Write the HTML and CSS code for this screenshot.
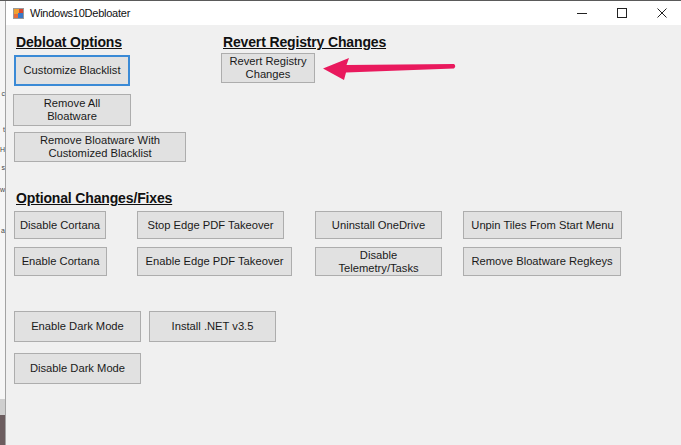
FILE: index.html
```html
<!DOCTYPE html>
<html>
<head>
<meta charset="utf-8">
<link rel="stylesheet" href="styles.css">
</head>
<body>
<div class="screen">
  <div class="topline"></div>
  <div class="main">
    <div class="desk">
      <div class="desk-text">
        <div class="frag f1">c</div>
        <div class="frag f2">t</div>
        <div class="frag f3">H</div>
        <div class="frag f4">s</div>
        <div class="frag f5">w</div>
        <div class="frag f6">a</div>
      </div>
      <div class="desk-gray"></div>
      <div class="desk-dark"></div>
    </div>
    <div class="window">
      <div class="titlebar">
        <svg class="appicon" width="11" height="11" viewBox="0 0 11 11">
          <rect x="0.5" y="0.5" width="10" height="10" fill="#e8e8e8" stroke="#9a9a9a"/>
          <rect x="1" y="1" width="5" height="5" fill="#f0a030"/>
          <rect x="6" y="1" width="4" height="4" fill="#d9452f"/>
          <rect x="1" y="6" width="4" height="4" fill="#e86c3a"/>
          <rect x="5" y="5" width="5" height="5" fill="#3a78c8"/>
        </svg>
        <span class="title">Windows10Debloater</span>
        <div class="caption">
          <div class="capbtn">
            <svg width="10" height="10" viewBox="0 0 10 10"><line x1="0" y1="5.5" x2="10" y2="5.5" stroke="#222" stroke-width="1"/></svg>
          </div>
          <div class="capbtn">
            <svg width="10" height="10" viewBox="0 0 10 10"><rect x="0.5" y="0.5" width="9" height="9" fill="none" stroke="#222" stroke-width="1"/></svg>
          </div>
          <div class="capbtn close">
            <svg width="10" height="10" viewBox="0 0 10 10"><path d="M0.5 0.5 L9.5 9.5 M9.5 0.5 L0.5 9.5" stroke="#222" stroke-width="1" fill="none"/></svg>
          </div>
        </div>
      </div>
      <div class="client">
        <div class="top">
          <div class="col1">
            <div class="heading">Debloat Options</div>
            <div class="btn focused b-customize">Customize Blacklist</div>
            <div class="btn b-removeall">Remove All<br>Bloatware</div>
            <div class="btn b-removewith">Remove Bloatware With<br>Customized Blacklist</div>
          </div>
          <div class="col2">
            <div class="heading">Revert Registry Changes</div>
            <div class="revert-row">
              <div class="btn b-revert">Revert Registry<br>Changes</div>
              <svg class="arrow" width="138" height="27" viewBox="0 0 138 27">
                <path d="M3 13.5 L29 3 L26.5 10 L134 9 Q136.5 11 134 13.5 L26 17.5 L24 25 Z" fill="#e9195d"/>
              </svg>
            </div>
          </div>
        </div>
        <div class="heading opt">Optional Changes/Fixes</div>
        <div class="grid4">
          <div class="btn r1 w92">Disable Cortana</div>
          <div class="btn r1 w147">Stop Edge PDF Takeover</div>
          <div class="btn r1 w127">Uninstall OneDrive</div>
          <div class="btn r1 w159">Unpin Tiles From Start Menu</div>
          <div class="btn r2 w93">Enable Cortana</div>
          <div class="btn r2 w155">Enable Edge PDF Takeover</div>
          <div class="btn r2 w127">Disable<br>Telemetry/Tasks</div>
          <div class="btn r2 w158">Remove Bloatware Regkeys</div>
        </div>
        <div class="row3">
          <div class="btn tall w127">Enable Dark Mode</div>
          <div class="btn tall w127">Install .NET v3.5</div>
        </div>
        <div class="row4">
          <div class="btn tall w127">Disable Dark Mode</div>
        </div>
      </div>
    </div>
  </div>
</div>
</body>
</html>
```
FILE: styles.css
```css
* { box-sizing: border-box; }
html, body { margin: 0; padding: 0; }
body {
  width: 681px;
  height: 445px;
  overflow: hidden;
  background: #f0f0f0;
  font-family: "Liberation Sans", Arial, sans-serif;
}
.screen {
  width: 681px;
  height: 445px;
  display: flex;
  flex-direction: column;
  overflow: hidden;
}
.topline {
  height: 1px;
  background: #5a5a5a;
  flex: none;
}
.main {
  flex: 1;
  display: flex;
  min-height: 0;
}
.desk {
  width: 5px;
  flex: none;
  display: flex;
  flex-direction: column;
}
.desk-text {
  flex: 1;
  background: #f6f6f6;
  font-size: 7px;
  color: #444;
  line-height: 10px;
}
.frag {
  height: 10px;
  text-align: right;
  white-space: nowrap;
}
.f1 { margin-top: 88px; }
.f2 { margin-top: 26px; }
.f3 { margin-top: 10px; }
.f4 { margin-top: 8px; }
.f5 { margin-top: 12px; }
.f6 { margin-top: 31px; }
.desk-gray {
  height: 16px;
  flex: none;
  background: #cfcfcf;
}
.desk-dark {
  height: 30px;
  flex: none;
  background: #6c5d5f;
}
.window {
  flex: 1;
  display: flex;
  flex-direction: column;
  border-left: 1px solid #a3a3a3;
  background: #f0f0f0;
  min-width: 0;
}
.titlebar {
  height: 24px;
  flex: none;
  background: #ffffff;
  display: flex;
  align-items: center;
  padding-left: 7px;
}
.appicon { flex: none; }
.title {
  margin-left: 6px;
  font-size: 11px;
  letter-spacing: -0.25px;
  color: #111;
}
.caption {
  margin-left: auto;
  display: flex;
  height: 24px;
}
.capbtn {
  width: 40px;
  height: 24px;
  display: flex;
  align-items: center;
  justify-content: center;
}
.capbtn.close { width: 39px; }
.capbtn svg { display: block; }
.client {
  flex: 1;
  padding-left: 8px;
  display: flex;
  flex-direction: column;
  align-items: flex-start;
}
.heading {
  font-size: 14px;
  font-weight: bold;
  text-decoration: underline;
  line-height: 16px;
  height: 16px;
  color: #111;
  margin-left: 2px;
  white-space: nowrap;
  letter-spacing: -0.15px;
}
.top {
  display: flex;
  margin-top: 9px;
}
.col1 {
  width: 207px;
  display: flex;
  flex-direction: column;
  align-items: flex-start;
}
.col2 {
  display: flex;
  flex-direction: column;
  align-items: flex-start;
}
.btn {
  display: flex;
  align-items: center;
  justify-content: center;
  text-align: center;
  background: #e1e1e1;
  border: 1px solid #adadad;
  font-size: 11.2px;
  line-height: 13px;
  color: #1a1a1a;
  white-space: nowrap;
  flex: none;
}
.btn.focused {
  border: 2px solid #3a8ad6;
}
.b-customize { width: 116px; height: 31px; margin-top: 5px; }
.b-removeall { width: 118px; height: 32px; margin-top: 8px; margin-left: -1px; }
.b-removewith { width: 172px; height: 30px; margin-top: 6px; }
.revert-row {
  display: flex;
  align-items: flex-start;
  margin-top: 3px;
}
.b-revert { width: 94px; height: 30px; }
.arrow { display: block; margin-left: 5px; margin-top: 2px; flex: none; }
.heading.opt { margin-top: 28px; }
.grid4 {
  display: grid;
  grid-template-columns: 123px 178px 148px auto;
  grid-template-rows: 28px 29px;
  row-gap: 8px;
  margin-top: 5px;
  justify-items: start;
}
.r1 { height: 28px; }
.r2 { height: 29px; }
.w92 { width: 92px; }
.w93 { width: 93px; }
.w127 { width: 127px; }
.w147 { width: 147px; }
.w155 { width: 155px; }
.w158 { width: 158px; }
.w159 { width: 159px; }
.tall { height: 31px; }
.row3 {
  display: flex;
  gap: 8px;
  margin-top: 35px;
}
.row4 {
  display: flex;
  margin-top: 11px;
}
```
